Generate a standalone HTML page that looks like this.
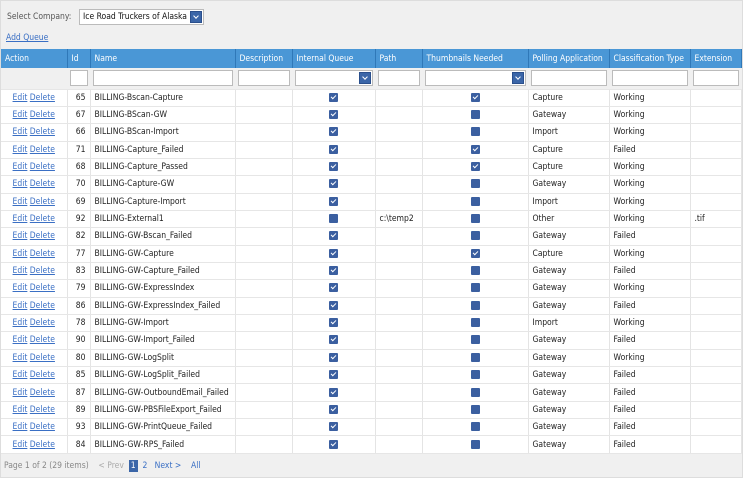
<!DOCTYPE html>
<html><head><meta charset="utf-8"><style>
*{margin:0;padding:0;box-sizing:border-box}
body{width:745px;height:482px;background:#fff;font-family:"DejaVu Sans Condensed","Liberation Sans",sans-serif;font-size:8.5px;color:#222;position:relative;overflow:hidden}
#wrap{position:absolute;left:0;top:0;width:743px;height:478px;background:#f0f0f0;border:1px solid #ddd}
.lbl{position:absolute;left:6px;top:11px;color:#555}
.sel{position:absolute;left:78px;top:8px;width:125px;height:16px;background:#fff;border:1px solid #bbb;padding:2px 3px;color:#111}
.dd{position:absolute;right:1px;top:1px;width:12px;height:12px;background:#3b66a8;border:1px solid #2a4f8c}
.dd:after{content:"";position:absolute;left:3px;top:2px;width:3px;height:3px;border-right:1.5px solid #fff;border-bottom:1.5px solid #fff;transform:rotate(45deg)}
.add{position:absolute;left:5px;top:32px;color:#3a6fc4;text-decoration:underline}
table{position:absolute;left:0;top:48px;border-collapse:collapse;table-layout:fixed;width:740px}
th{background:#4a97d6;color:#fff;font-weight:normal;text-align:left;padding:0 4px;height:19px;border-right:1px solid #2f78b8;white-space:nowrap;overflow:hidden}
tr.f td{background:#f0f0f0;height:21px;padding:2px;border-right:1px solid #f0f0f0}
.in{height:16px;background:#fff;border:1px solid #bbb;position:relative}
td{background:#fff;height:17.35px;padding:0 4px;border-right:1px solid #e4e4e4;border-bottom:1px solid #e6e6e6;white-space:nowrap;overflow:hidden;line-height:16px}
td.a{text-align:center}
td.a span{color:#3a6fc4;text-decoration:underline}
td.n{text-align:right}
td.c{text-align:center}
.ck,.uk{display:inline-block;width:9px;height:9px;background:#3b5fa0;border-radius:1px;vertical-align:middle;position:relative}
.ck:after{content:"";position:absolute;left:3px;top:1px;width:2px;height:4px;border-right:1.5px solid #fff;border-bottom:1.5px solid #fff;transform:rotate(45deg)}
.pg{position:absolute;left:3px;top:459px;color:#888}
.cur{display:inline-block;background:#3b66a8;color:#fff;padding:0 2px;height:12px;line-height:12px}
.lk{color:#3a6fc4}
.dis{color:#aaa}
</style></head><body><div id="wrap">
<div class="lbl">Select Company:</div>
<div class="sel">Ice Road Truckers of Alaska<div class="dd"></div></div>
<div class="add">Add Queue</div>
<table>
<colgroup><col style="width:66px"><col style="width:23px"><col style="width:145px"><col style="width:57px"><col style="width:83px"><col style="width:47px"><col style="width:106px"><col style="width:81px"><col style="width:81px"><col style="width:51px"></colgroup>
<tr><th>Action</th><th>Id</th><th>Name</th><th>Description</th><th>Internal Queue</th><th>Path</th><th>Thumbnails Needed</th><th>Polling Application</th><th>Classification Type</th><th>Extension</th></tr>
<tr class="f"><td></td><td><div class="in"></div></td><td><div class="in"></div></td><td><div class="in"></div></td><td><div class="in"><div class="dd"></div></div></td><td><div class="in"></div></td><td><div class="in"><div class="dd"></div></div></td><td><div class="in"></div></td><td><div class="in"></div></td><td><div class="in"></div></td></tr>
<tr><td class="a"><span>Edit</span> <span>Delete</span></td><td class="n">65</td><td>BILLING-Bscan-Capture</td><td></td><td class="c"><i class="ck"></i></td><td></td><td class="c"><i class="ck"></i></td><td>Capture</td><td>Working</td><td></td></tr>
<tr><td class="a"><span>Edit</span> <span>Delete</span></td><td class="n">67</td><td>BILLING-BScan-GW</td><td></td><td class="c"><i class="ck"></i></td><td></td><td class="c"><i class="uk"></i></td><td>Gateway</td><td>Working</td><td></td></tr>
<tr><td class="a"><span>Edit</span> <span>Delete</span></td><td class="n">66</td><td>BILLING-BScan-Import</td><td></td><td class="c"><i class="ck"></i></td><td></td><td class="c"><i class="uk"></i></td><td>Import</td><td>Working</td><td></td></tr>
<tr><td class="a"><span>Edit</span> <span>Delete</span></td><td class="n">71</td><td>BILLING-Capture_Failed</td><td></td><td class="c"><i class="ck"></i></td><td></td><td class="c"><i class="ck"></i></td><td>Capture</td><td>Failed</td><td></td></tr>
<tr><td class="a"><span>Edit</span> <span>Delete</span></td><td class="n">68</td><td>BILLING-Capture_Passed</td><td></td><td class="c"><i class="ck"></i></td><td></td><td class="c"><i class="ck"></i></td><td>Capture</td><td>Working</td><td></td></tr>
<tr><td class="a"><span>Edit</span> <span>Delete</span></td><td class="n">70</td><td>BILLING-Capture-GW</td><td></td><td class="c"><i class="ck"></i></td><td></td><td class="c"><i class="uk"></i></td><td>Gateway</td><td>Working</td><td></td></tr>
<tr><td class="a"><span>Edit</span> <span>Delete</span></td><td class="n">69</td><td>BILLING-Capture-Import</td><td></td><td class="c"><i class="ck"></i></td><td></td><td class="c"><i class="uk"></i></td><td>Import</td><td>Working</td><td></td></tr>
<tr><td class="a"><span>Edit</span> <span>Delete</span></td><td class="n">92</td><td>BILLING-External1</td><td></td><td class="c"><i class="uk"></i></td><td>c:\temp2</td><td class="c"><i class="uk"></i></td><td>Other</td><td>Working</td><td>.tif</td></tr>
<tr><td class="a"><span>Edit</span> <span>Delete</span></td><td class="n">82</td><td>BILLING-GW-Bscan_Failed</td><td></td><td class="c"><i class="ck"></i></td><td></td><td class="c"><i class="uk"></i></td><td>Gateway</td><td>Failed</td><td></td></tr>
<tr><td class="a"><span>Edit</span> <span>Delete</span></td><td class="n">77</td><td>BILLING-GW-Capture</td><td></td><td class="c"><i class="ck"></i></td><td></td><td class="c"><i class="ck"></i></td><td>Capture</td><td>Working</td><td></td></tr>
<tr><td class="a"><span>Edit</span> <span>Delete</span></td><td class="n">83</td><td>BILLING-GW-Capture_Failed</td><td></td><td class="c"><i class="ck"></i></td><td></td><td class="c"><i class="uk"></i></td><td>Gateway</td><td>Failed</td><td></td></tr>
<tr><td class="a"><span>Edit</span> <span>Delete</span></td><td class="n">79</td><td>BILLING-GW-ExpressIndex</td><td></td><td class="c"><i class="ck"></i></td><td></td><td class="c"><i class="uk"></i></td><td>Gateway</td><td>Working</td><td></td></tr>
<tr><td class="a"><span>Edit</span> <span>Delete</span></td><td class="n">86</td><td>BILLING-GW-ExpressIndex_Failed</td><td></td><td class="c"><i class="ck"></i></td><td></td><td class="c"><i class="uk"></i></td><td>Gateway</td><td>Failed</td><td></td></tr>
<tr><td class="a"><span>Edit</span> <span>Delete</span></td><td class="n">78</td><td>BILLING-GW-Import</td><td></td><td class="c"><i class="ck"></i></td><td></td><td class="c"><i class="uk"></i></td><td>Import</td><td>Working</td><td></td></tr>
<tr><td class="a"><span>Edit</span> <span>Delete</span></td><td class="n">90</td><td>BILLING-GW-Import_Failed</td><td></td><td class="c"><i class="ck"></i></td><td></td><td class="c"><i class="uk"></i></td><td>Gateway</td><td>Failed</td><td></td></tr>
<tr><td class="a"><span>Edit</span> <span>Delete</span></td><td class="n">80</td><td>BILLING-GW-LogSplit</td><td></td><td class="c"><i class="ck"></i></td><td></td><td class="c"><i class="uk"></i></td><td>Gateway</td><td>Working</td><td></td></tr>
<tr><td class="a"><span>Edit</span> <span>Delete</span></td><td class="n">85</td><td>BILLING-GW-LogSplit_Failed</td><td></td><td class="c"><i class="ck"></i></td><td></td><td class="c"><i class="uk"></i></td><td>Gateway</td><td>Failed</td><td></td></tr>
<tr><td class="a"><span>Edit</span> <span>Delete</span></td><td class="n">87</td><td>BILLING-GW-OutboundEmail_Failed</td><td></td><td class="c"><i class="ck"></i></td><td></td><td class="c"><i class="uk"></i></td><td>Gateway</td><td>Failed</td><td></td></tr>
<tr><td class="a"><span>Edit</span> <span>Delete</span></td><td class="n">89</td><td>BILLING-GW-PBSFileExport_Failed</td><td></td><td class="c"><i class="ck"></i></td><td></td><td class="c"><i class="uk"></i></td><td>Gateway</td><td>Failed</td><td></td></tr>
<tr><td class="a"><span>Edit</span> <span>Delete</span></td><td class="n">93</td><td>BILLING-GW-PrintQueue_Failed</td><td></td><td class="c"><i class="ck"></i></td><td></td><td class="c"><i class="uk"></i></td><td>Gateway</td><td>Failed</td><td></td></tr>
<tr><td class="a"><span>Edit</span> <span>Delete</span></td><td class="n">84</td><td>BILLING-GW-RPS_Failed</td><td></td><td class="c"><i class="ck"></i></td><td></td><td class="c"><i class="uk"></i></td><td>Gateway</td><td>Failed</td><td></td></tr>
</table>
<div class="pg">Page 1 of 2 (29 items) &nbsp;&nbsp;&nbsp;<span class="dis">&lt; Prev</span> &nbsp;<span class="cur">1</span>&nbsp; <span class="lk">2</span> &nbsp;&nbsp;<span class="lk">Next &gt;</span> &nbsp;&nbsp;&nbsp;<span class="lk">All</span></div>
</div></body></html>
